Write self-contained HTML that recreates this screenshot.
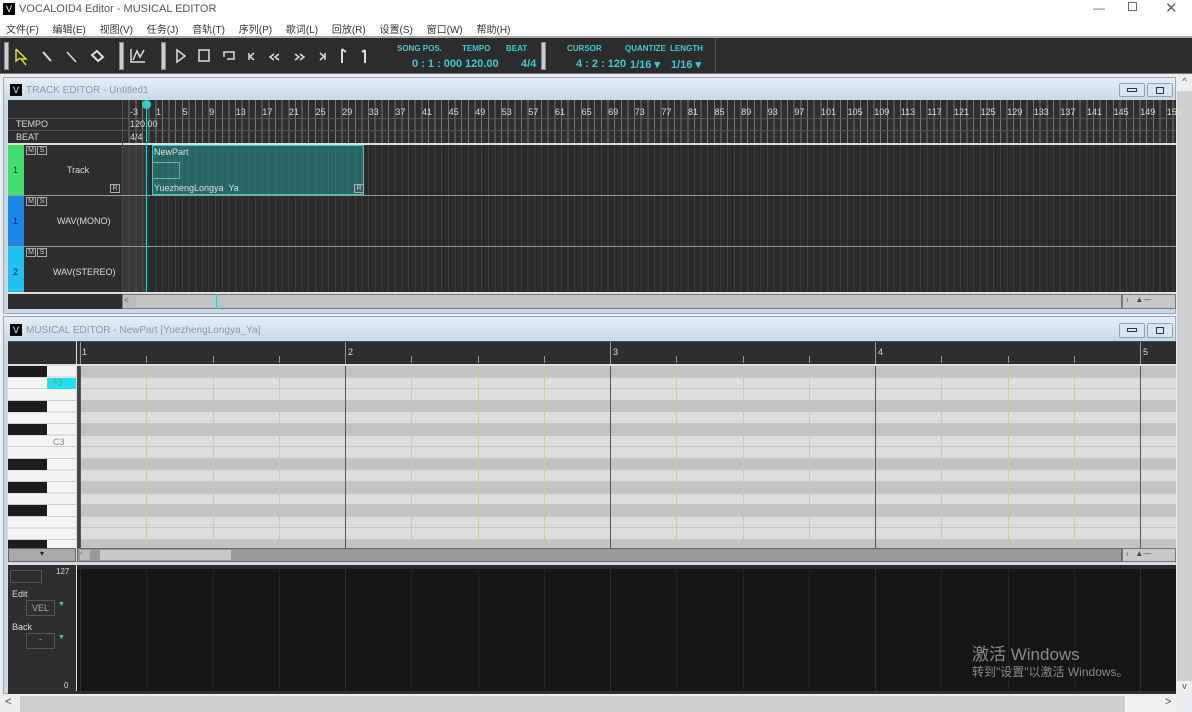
<!DOCTYPE html>
<html><head><meta charset="utf-8"><style>
*{margin:0;padding:0;box-sizing:border-box}
body{width:1192px;height:712px;overflow:hidden;background:#fff;font-family:"Liberation Sans","Noto Sans CJK SC",sans-serif;position:relative}
.a{position:absolute}
.t{font-size:9px;color:#ddd;white-space:nowrap}
.cy{color:#3ec9d6;font-weight:bold;font-size:8px}
.cv{color:#3ec9d6;font-weight:bold;font-size:11px}
.grip{position:absolute;width:5px;height:28px;background:#ccc;border:1px solid #888;top:4px}
.ms{position:absolute;width:10px;height:9px;border:1px solid #aaa;font-size:7px;color:#ccc;text-align:center;line-height:7px}
</style></head><body>
<!-- title -->
<div class="a" style="left:3px;top:3px;width:12px;height:12px;background:#000;color:#fff;font-size:9px;text-align:center;line-height:12px">V</div>
<div class="a" style="left:19px;top:3px;font-size:11px;color:#555">VOCALOID4 Editor - MUSICAL EDITOR</div>
<div class="a" style="left:1093px;top:1px;font-size:12px;color:#666">—</div>
<div class="a" style="left:1128px;top:2px;width:9px;height:9px;border:1px solid #666"></div>
<div class="a" style="left:1165px;top:-1px;font-size:15px;color:#666">✕</div>
<div class="a" style="left:6px;top:21px;font-size:10px;color:#333;word-spacing:11px;white-space:nowrap">文件(F) 编辑(E) 视图(V) 任务(J) 音轨(T) 序列(P) 歌词(L) 回放(R) 设置(S) 窗口(W) 帮助(H)</div>
<!-- toolbar -->
<div class="a" style="left:0;top:36px;width:1192px;height:38px;background:#2c2c2c;border-top:2px solid #aaa;border-bottom:1px solid #777">
 <div class="grip" style="left:4px"></div><div class="grip" style="left:119px"></div><div class="grip" style="left:161px"></div><div class="grip" style="left:541px"></div>
 <svg class="a" style="left:12px;top:8px" width="100" height="20" stroke="#ddd" stroke-width="2" fill="none">
  <path d="M4 3 L14 13 L9 13 L14 19" stroke="#d8e030" stroke-width="1.5"/><path d="M4 3 L4 15 L8 12" stroke="#d8e030" stroke-width="1.5"/>
  <path d="M31 6 L39 15"/><path d="M55 6 L64 16" stroke-width="1.5"/><path d="M80 9 l5 -4 l6 6 l-5 4z"/>
 </svg>
 <svg class="a" style="left:128px;top:9px" width="20" height="18" stroke="#ddd" fill="none" stroke-width="1.5"><path d="M3 2 V15 H17"/><path d="M5 13 L9 4 L12 10 L16 3"/></svg>
 <svg class="a" style="left:170px;top:9px" width="215" height="18" stroke="#ddd" fill="none" stroke-width="1.5">
  <path d="M7 3 L15 9 L7 15z"/><rect x="29" y="3" width="10" height="11"/><path d="M54 10 V5 H64 V12 H57"/>
  <path d="M79 6 V13 M84 6 L80 9.5 L84 13"/><path d="M104 7 l-4 3 l4 3 M109 7 l-4 3 l4 3"/><path d="M125 7 l4 3 l-4 3 M130 7 l4 3 l-4 3"/>
  <path d="M150 6 l4 3.5 l-4 3.5 M155 6 V13"/><path d="M172 2 V16 M172 2 l4 3" stroke-width="2"/><path d="M195 3 V16 M192 5 l3 -2" stroke-width="2"/>
 </svg>
 <div class="a cy" style="left:397px;top:6px">SONG POS.</div><div class="a cy" style="left:462px;top:6px">TEMPO</div><div class="a cy" style="left:506px;top:6px">BEAT</div>
 <div class="a cv" style="left:412px;top:20px">0 : 1 : 000</div><div class="a cv" style="left:465px;top:20px">120.00</div><div class="a cv" style="left:521px;top:20px">4/4</div>
 <div class="a cy" style="left:567px;top:6px">CURSOR</div><div class="a cy" style="left:625px;top:6px">QUANTIZE</div><div class="a cy" style="left:670px;top:6px">LENGTH</div>
 <div class="a cv" style="left:576px;top:20px">4 : 2 : 120</div><div class="a cv" style="left:630px;top:20px">1/16 ▾</div><div class="a cv" style="left:671px;top:20px">1/16 ▾</div>
 <div class="a" style="left:715px;top:0;width:1px;height:36px;background:#555"></div>
</div>
<!-- mdi background -->
<div class="a" style="left:0;top:74px;width:1192px;height:638px;background:#e9eef3"></div>
<!-- right scrollbar -->
<div class="a" style="left:1177px;top:76px;width:15px;height:620px;background:#cfcfcf"></div>
<div class="a" style="left:1177px;top:76px;width:15px;height:15px;background:#eee;font-size:9px;text-align:center;color:#444">^</div>
<div class="a" style="left:1177px;top:681px;width:15px;height:15px;background:#eee;font-size:9px;text-align:center;color:#444">v</div>
<!-- bottom scrollbar -->
<div class="a" style="left:0;top:696px;width:1177px;height:16px;background:#cfcfcf"></div>
<div class="a" style="left:0;top:696px;width:20px;height:16px;background:#eee;font-size:11px;color:#444;padding-left:5px">&lt;</div>
<div class="a" style="left:1125px;top:696px;width:52px;height:16px;background:#f0f0f0;font-size:11px;color:#444;padding-left:40px">&gt;</div>

<!-- TRACK EDITOR -->
<div class="a" style="left:3px;top:77px;width:1173px;height:237px;background:#c9d9e8;border:1px solid #9ab"></div>
<div class="a" style="left:4px;top:78px;width:1171px;height:22px;background:linear-gradient(#e6eef6,#c8d9e9)"></div>
<div class="a" style="left:10px;top:84px;width:12px;height:12px;background:#000;color:#fff;font-size:9px;text-align:center;line-height:12px">V</div>
<div class="a" style="left:26px;top:85px;font-size:10px;color:#8a9aaa">TRACK EDITOR - Untitled1</div>
<div class="a" style="left:1119px;top:83px;width:26px;height:14px;border:1px solid #8aa;border-radius:2px;background:#d9e5f0"><div style="margin:4px auto;width:10px;height:4px;border:1px solid #333"></div></div>
<div class="a" style="left:1147px;top:83px;width:26px;height:14px;border:1px solid #8aa;border-radius:2px;background:#d9e5f0"><div style="margin:3px auto;width:8px;height:7px;border:1px solid #333"></div></div>
<!-- ruler -->
<div class="a" style="left:8px;top:100px;width:1168px;height:44px;background:#2e2e2e"></div>
<div class="a" style="left:122px;top:100px;width:1054px;height:44px;background:repeating-linear-gradient(90deg,#777 0 1px,transparent 1px 6.65px)"></div>
<div class="a" style="left:8px;top:118px;width:1168px;height:1px;background:#555"></div>
<div class="a" style="left:8px;top:130px;width:1168px;height:1px;background:#555"></div>
<div class="a" style="left:8px;top:143px;width:1168px;height:2px;background:#ddd"></div>
<div class="a t" style="left:16px;top:119px">TEMPO</div><div class="a t" style="left:16px;top:132px">BEAT</div>
<div class="a t" style="left:130px;top:119px">120.00</div><div class="a t" style="left:130px;top:132px">4/4</div>
<div class="a" style="left:122px;top:100px;width:1px;height:192px;background:#555"></div>
<div class="a t" style="left:130px;top:107px;font-size:9px;word-spacing:0">-3</div>
<div id="nums"></div>
<!-- tracks -->
<div class="a" style="left:8px;top:145px;width:114px;height:147px;background:#2e2e2e"></div>
<div class="a" style="left:122px;top:145px;width:1054px;height:147px;background:#2a2a2a"></div>
<div class="a" style="left:122px;top:145px;width:1054px;height:147px;background:repeating-linear-gradient(90deg,#3c3c3c 0 1px,transparent 1px 6.65px)"></div>
<div class="a" style="left:122px;top:145px;width:24px;height:147px;background:rgba(255,255,255,.07)"></div>
<div class="a" style="left:8px;top:145px;width:16px;height:50px;background:#3fe06a"></div>
<div class="a" style="left:8px;top:196px;width:16px;height:50px;background:#1a86e6"></div>
<div class="a" style="left:8px;top:247px;width:16px;height:45px;background:#20c0f0"></div>
<div class="a" style="left:8px;top:195px;width:1168px;height:1px;background:#999"></div>
<div class="a" style="left:8px;top:246px;width:1168px;height:1px;background:#999"></div>
<div class="a t" style="left:13px;top:165px;color:#222">1</div><div class="a t" style="left:13px;top:216px;color:#222">1</div><div class="a t" style="left:13px;top:267px;color:#222">2</div>
<div class="ms" style="left:26px;top:146px">M</div><div class="ms" style="left:37px;top:146px">S</div>
<div class="ms" style="left:26px;top:197px">M</div><div class="ms" style="left:37px;top:197px">S</div>
<div class="ms" style="left:26px;top:248px">M</div><div class="ms" style="left:37px;top:248px">S</div>
<div class="a t" style="left:67px;top:165px">Track</div><div class="ms" style="left:110px;top:184px">R</div>
<div class="a t" style="left:57px;top:216px">WAV(MONO)</div><div class="a t" style="left:53px;top:267px">WAV(STEREO)</div>
<div class="a" style="left:152px;top:145px;width:212px;height:50px;background:rgba(40,150,150,.55);border:1px solid #3cc"></div>
<div class="a t" style="left:154px;top:147px">NewPart</div>
<div class="a" style="left:152px;top:162px;width:28px;height:17px;border:1px solid #7aa"></div>
<div class="a t" style="left:154px;top:183px">YuezhengLongya&nbsp; Ya</div>
<div class="ms" style="left:354px;top:184px">R</div>
<div class="a" style="left:146px;top:100px;width:1px;height:192px;background:#3cc"></div>
<div class="a" style="left:142px;top:100px;width:9px;height:9px;border-radius:50%;background:#3cc"></div>
<!-- track scroll -->
<div class="a" style="left:8px;top:292px;width:1168px;height:2px;background:#ddd"></div>
<div class="a" style="left:8px;top:294px;width:114px;height:15px;background:#2e2e2e"></div>
<div class="a" style="left:122px;top:294px;width:1000px;height:15px;background:#c2c2c2;border:1px solid #777"></div>
<div class="a" style="left:124px;top:296px;width:12px;height:11px;font-size:8px;color:#555;background:#bbb">&lt;</div>
<div class="a" style="left:216px;top:294px;width:1px;height:15px;background:#3cc"></div>
<div class="a" style="left:1122px;top:294px;width:54px;height:15px;background:#c8c8c8;border:1px solid #777;font-size:8px;color:#444;padding-left:3px">›&nbsp;&nbsp; ▲—</div>

<!-- MUSICAL EDITOR -->
<div class="a" style="left:3px;top:316px;width:1173px;height:378px;background:#c9d9e8;border:1px solid #9ab"></div>
<div class="a" style="left:4px;top:317px;width:1171px;height:24px;background:linear-gradient(#e6eef6,#c8d9e9)"></div>
<div class="a" style="left:10px;top:324px;width:12px;height:12px;background:#000;color:#fff;font-size:9px;text-align:center;line-height:12px">V</div>
<div class="a" style="left:26px;top:325px;font-size:10px;color:#8a9aaa">MUSICAL EDITOR - NewPart [YuezhengLongya_Ya]</div>
<div class="a" style="left:1119px;top:323px;width:26px;height:15px;border:1px solid #8aa;border-radius:2px;background:#d9e5f0"><div style="margin:4px auto;width:10px;height:4px;border:1px solid #333"></div></div>
<div class="a" style="left:1147px;top:323px;width:26px;height:15px;border:1px solid #8aa;border-radius:2px;background:#d9e5f0"><div style="margin:3px auto;width:8px;height:7px;border:1px solid #333"></div></div>
<div class="a" style="left:8px;top:341px;width:1168px;height:24px;background:#2e2e2e;border-top:1px solid #2a5a5a"></div>
<div class="a" style="left:8px;top:364px;width:1168px;height:2px;background:#ddd"></div>
<div class="a" style="left:76px;top:341px;width:1px;height:350px;background:#ddd"></div>
<div id="mr"></div>
<!-- keyboard -->
<div class="a" style="left:8px;top:366px;width:68px;height:182px;background:repeating-linear-gradient(#f4f4f4 0 10.6px,#ccc 10.6px 11.6px)"></div>
<div id="keys"></div>
<div class="a" style="left:47px;top:378px;width:29px;height:11px;background:#22e0f0;font-size:8px;color:#4a8;padding-left:6px">F3</div>
<div class="a" style="left:53px;top:437px;font-size:9px;color:#888">C3</div>
<!-- grid -->
<div class="a" style="left:77px;top:366px;width:4px;height:182px;background:#444"></div>
<div id="grid"></div>
<!-- piano scroll -->
<div class="a" style="left:8px;top:548px;width:68px;height:14px;background:#aaa;border:1px solid #666;font-size:8px;text-align:center;color:#222">▾</div>
<div class="a" style="left:77px;top:548px;width:1045px;height:14px;background:#9a9a9a;border:1px solid #666"></div>
<div class="a" style="left:80px;top:550px;width:10px;height:10px;background:#bbb;font-size:7px;color:#555">‹</div>
<div class="a" style="left:100px;top:550px;width:131px;height:10px;background:#c8c8c8"></div>
<div class="a" style="left:1122px;top:548px;width:54px;height:14px;background:#c8c8c8;border:1px solid #777;font-size:8px;color:#444;padding-left:3px">›&nbsp;&nbsp; ▲—</div>
<div class="a" style="left:8px;top:563px;width:1168px;height:2px;background:#ddd"></div>
<!-- control -->
<div class="a" style="left:8px;top:565px;width:68px;height:126px;background:#2e2e2e"></div>
<div class="a" style="left:77px;top:565px;width:1099px;height:126px;background:#161616;border-top:4px solid #2a2a2a"></div>
<div id="cl"></div>
<div class="a" style="left:10px;top:570px;width:32px;height:13px;border:1px solid #555"></div>
<div class="a t" style="left:56px;top:567px;font-size:8px">127</div>
<div class="a t" style="left:12px;top:589px">Edit</div>
<div class="a" style="left:26px;top:600px;width:29px;height:16px;border:1px solid #555;font-size:9px;color:#aaa;text-align:center;line-height:15px">VEL</div>
<div class="a" style="left:58px;top:601px;font-size:7px;color:#3cc">▼</div>
<div class="a t" style="left:12px;top:622px">Back</div>
<div class="a" style="left:26px;top:633px;width:29px;height:16px;border:1px solid #555;font-size:9px;color:#aaa;text-align:center">-</div>
<div class="a" style="left:58px;top:634px;font-size:7px;color:#3cc">▼</div>
<div class="a t" style="left:64px;top:681px;font-size:8px">0</div>
<div class="a" style="left:8px;top:691px;width:1168px;height:3px;background:#2e2e2e"></div>
<div class="a" style="left:972px;top:640px;font-size:17px;color:#8a8a8a">激活 Windows</div>
<div class="a" style="left:972px;top:663px;font-size:12px;color:#8a8a8a">转到"设置"以激活 Windows。</div>
<script>
var h='';var n=[1,5,9,13,17,21,25,29,33,37,41,45,49,53,57,61,65,69,73,77,81,85,89,93,97,101,105,109,113,117,121,125,129,133,137,141,145,149,153];
n.forEach(function(v,i){h+='<div class="a t" style="left:'+(156+i*26.6)+'px;top:107px;font-size:9px">'+v+'</div>';});
document.getElementById('nums').innerHTML=h;
h='';
[[1,82],[2,348],[3,613],[4,878],[5,1143]].forEach(function(m){h+='<div class="a t" style="left:'+m[1]+'px;top:347px">'+m[0]+'</div>';});
for(var x=80;x<1176;x+=66.25){var big=Math.abs((x-80)%265)<1;h+='<div class="a" style="left:'+Math.round(x)+'px;top:'+(big?342:356)+'px;width:1px;height:'+(big?22:7)+'px;background:#999"></div>';}
document.getElementById('mr').innerHTML=h;
h='';var blk=[0,1,0,0,1,0,1,0,0,1,0,1,0,1,0,0];
var k=[366,401,424,459,482,505,540];k.forEach(function(y){h+='<div class="a" style="left:8px;top:'+y+'px;width:39px;height:'+Math.min(11,548-y)+'px;background:#1c1c1c"></div>';});
document.getElementById('keys').innerHTML=h;
h='';var rows=[1,0,0,1,0,1,0,0,1,0,1,0,1,0,0,1];
for(var i=0;i<16;i++){var y=366+i*11.6;var hh=Math.min(11.6,548-y);h+='<div class="a" style="left:81px;top:'+y+'px;width:1095px;height:'+hh+'px;background:'+(rows[i]?'#c3c3c3':'#dcdcdc')+';border-bottom:1px solid #c9c9b8"></div>';}
for(var x=80;x<1176;x+=66.25){var big=Math.abs((x-80)%265)<1;h+='<div class="a" style="left:'+Math.round(x)+'px;top:366px;width:1px;height:182px;background:'+(big?'#555':'#c8cca8')+'"></div>';}
document.getElementById('grid').innerHTML=h;
h='';for(var x=80;x<1176;x+=66.25){var big=Math.abs((x-80)%265)<1;h+='<div class="a" style="left:'+Math.round(x)+'px;top:569px;width:1px;height:122px;background:'+(big?'#2e2e2e':'#222')+'"></div>';}
document.getElementById('cl').innerHTML=h;
</script>
</body></html>
